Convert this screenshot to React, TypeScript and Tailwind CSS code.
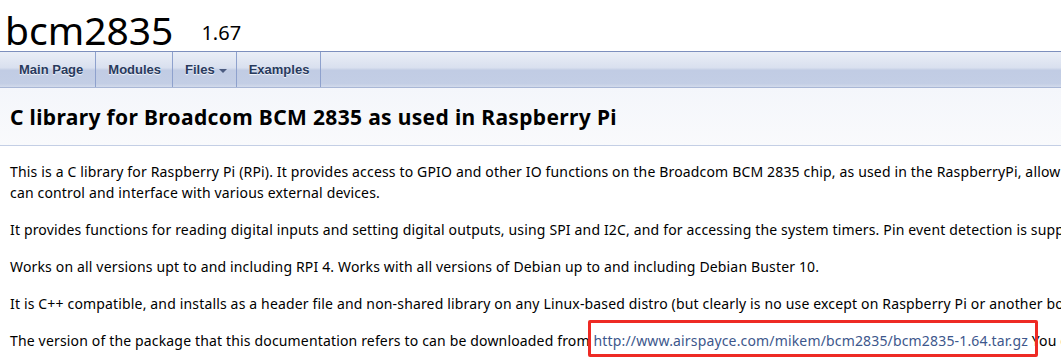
export default function App() {
  return (
    <div className="w-[1061px] h-[362px] overflow-hidden bg-white text-black font-['Noto_Sans',sans-serif]">
      {/* Project title */}
      <div className="h-[51px] flex items-end pl-[5px] whitespace-nowrap">
        <span className="text-[39px] leading-[51px] -mb-[4px]">bcm2835</span>
        <span className="text-[20px] leading-none ml-[28px] mb-[8px]">1.67</span>
      </div>

      {/* Tabs */}
      <div className="h-[37px] border-t border-[#7d8fbd] border-b border-b-[#a9b7d6] bg-[linear-gradient(#eaeef7_0%,#d9e0ef_45%,#c1cce4_52%,#c3cee5_90%,#d2daeb_100%)] flex pl-[7px] font-['Liberation_Sans',sans-serif] text-[13px] font-bold text-[#283a5d] [text-shadow:0_1px_1px_rgba(255,255,255,0.9)]">
        <a className="px-3 flex items-center border-r border-[#8ea1cd]">Main Page</a>
        <a className="pl-3 pr-[11px] flex items-center border-r border-[#8ea1cd]">Modules</a>
        <a className="pl-3 pr-[9px] flex items-center border-r border-[#8ea1cd]">
          Files
          <span className="ml-[4px] mt-[2px] w-0 h-0 border-x-[4px] border-x-transparent border-t-[4px] border-t-[#4b5b80]" />
        </a>
        <a className="pl-3 pr-[11px] flex items-center border-r border-[#8ea1cd]">Examples</a>
      </div>

      {/* Page header */}
      <div className="h-[58px] bg-[linear-gradient(#f4f6fb,#f9fafc)] border-b border-[#c4cfe5] flex items-center pl-[10px]">
        <h1 className="text-[21px] tracking-[0.34px] font-bold leading-[28px] whitespace-nowrap mt-[1px]">
          C library for Broadcom BCM 2835 as used in Raspberry Pi
        </h1>
      </div>

      {/* Contents */}
      <div className="pl-[10px] pt-[15px] text-[14px] tracking-[0.16px] leading-[21px] whitespace-nowrap space-y-[16px]">
        <p>
          This is a C library for Raspberry Pi (RPi). It provides access to GPIO and other IO functions on the Broadcom BCM 2835 chip, as used in the RaspberryPi, allowing access to the GPIO pins on the 26 pin IDE plug on the RPi board so you
          <br />
          can control and interface with various external devices.
        </p>
        <p>
          It provides functions for reading digital inputs and setting digital outputs, using SPI and I2C, and for accessing the system timers. Pin event detection is supported by polling (interrupts are not supported).
        </p>
        <p>Works on all versions upt to and including RPI 4. Works with all versions of Debian up to and including Debian Buster 10.</p>
        <p>
          It is C++ compatible, and installs as a header file and non-shared library on any Linux-based distro (but clearly is no use except on Raspberry Pi or another board with BCM 2835).
        </p>
        <p>
          The version of the package that this documentation refers to can be downloaded from{" "}
          <span className="relative">
            <a className="text-[#3d578c]">http://www.airspayce.com/mikem/bcm2835/bcm2835-1.64.tar.gz</a>
            <span className="absolute -left-[6px] -right-[10px] -top-[11px] -bottom-[7px] border-[3px] border-[#ee2a24] rounded-[2px]" />
          </span>{" "}
          You can find the latest version at http://www.airspayce.com/mikem/bcm2835
        </p>
      </div>
    </div>
  )
}
